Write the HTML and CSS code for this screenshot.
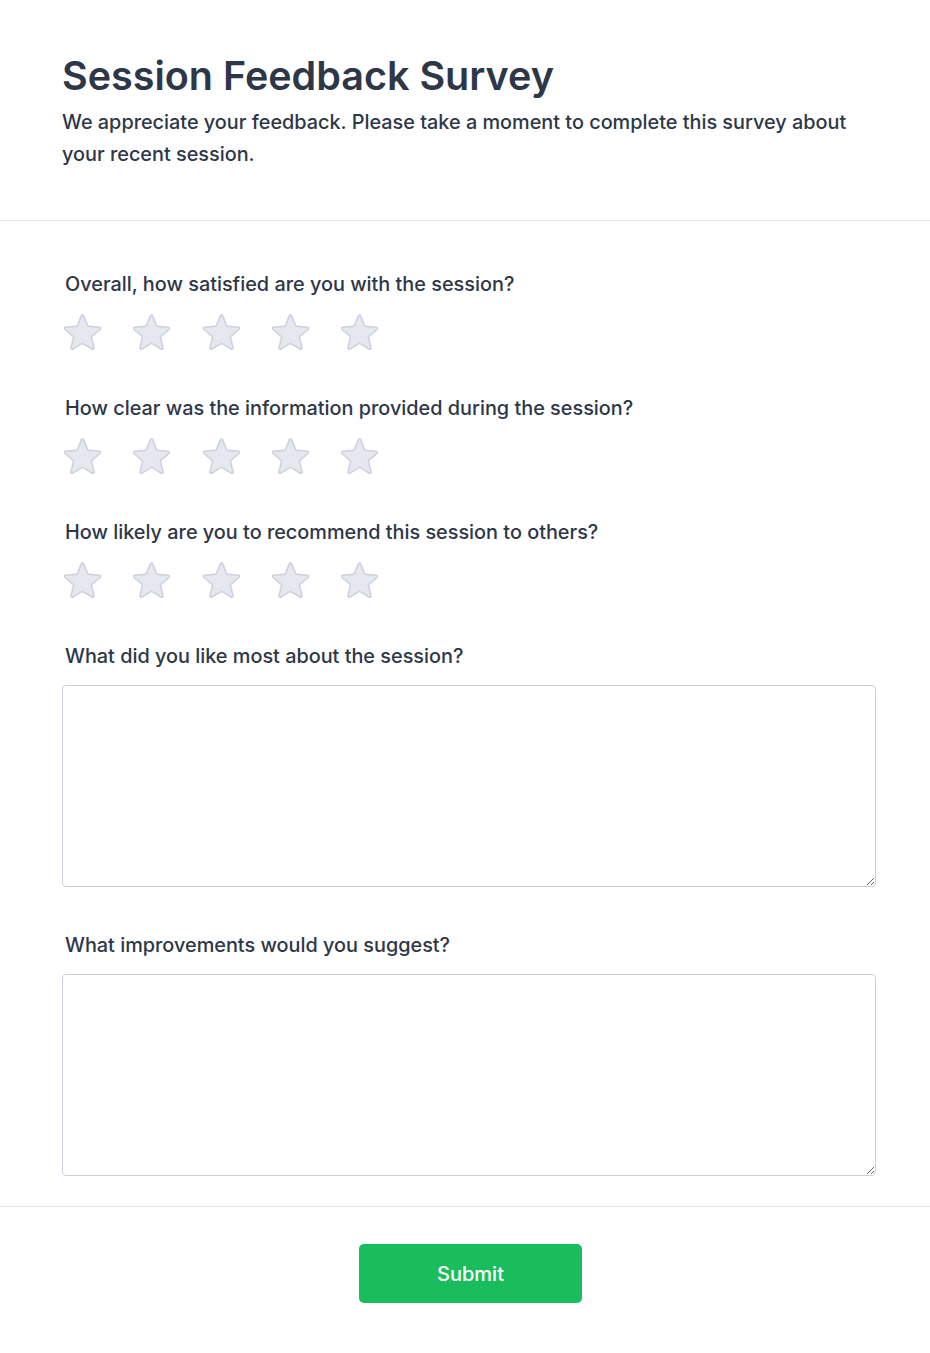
FILE: index.html
```html
<!DOCTYPE html>
<html>
<head>
  <title>Session Feedback Survey</title>
  <link rel="stylesheet" href="styles.css">
  <meta charset="utf-8">
  <meta name="viewport" content="width=device-width">
</head>

<body lang="en">
  <header class="s-head">
    <h1>Session Feedback Survey</h1>
    <p>We appreciate your feedback. Please take a moment to complete this survey about your recent session.</p>
  </header>

  <form class="s-body">
    <div class="s-q rate">
      <label>Overall, how satisfied are you with the session?</label>
      <div class="s-stars" data-name="overall"></div>
    </div>
    <div class="s-q rate">
      <label>How clear was the information provided during the session?</label>
      <div class="s-stars" data-name="clarity"></div>
    </div>
    <div class="s-q rate">
      <label>How likely are you to recommend this session to others?</label>
      <div class="s-stars" data-name="recommend"></div>
    </div>
    <div class="s-q">
      <label for="liked">What did you like most about the session?</label>
      <textarea id="liked"></textarea>
    </div>
    <div class="s-q">
      <label for="improve">What improvements would you suggest?</label>
      <textarea id="improve"></textarea>
    </div>
  </form>

  <footer class="s-foot">
    <button class="s-submit" type="button">Submit</button>
  </footer>

  <template class="s-startemp">
    <button class="s-star" type="button">
      <svg viewBox="1.6 2.7 20.8 19.2" width="41" height="38"><path d="M11.48 3.499a.562.562 0 011.04 0l2.125 5.111a.563.563 0 00.475.345l5.518.442c.499.04.701.663.321.988l-4.204 3.602a.563.563 0 00-.182.557l1.285 5.385a.562.562 0 01-.84.61l-4.725-2.885a.562.562 0 00-.586 0L6.982 20.54a.562.562 0 01-.84-.61l1.285-5.386a.562.562 0 00-.182-.557l-4.204-3.602a.563.563 0 01.321-.988l5.518-.442a.563.563 0 00.475-.345L11.48 3.5z"/></svg>
    </button>
  </template>

  <script>
    const startemp = document.getElementsByClassName("s-startemp")[0];
    const rows = document.getElementsByClassName("s-stars");
    for(let r=0;r<rows.length;r++){
      for(let i=0;i<5;i++){
        rows[r].appendChild(startemp.content.cloneNode(true));
      }
      let stars = rows[r].getElementsByClassName("s-star");
      for(let i=0;i<stars.length;i++){
        stars[i].addEventListener("click",()=>{
          for(let j=0;j<stars.length;j++){stars[j].classList.toggle("on", j<=i);}
        });
      }
    }
  </script>
</body>
</html>
```

FILE: styles.css
```css
body {
  margin: 0;
  color: #2d3748;
  font-family: Inter, "Noto Sans", sans-serif;
  background: #fff;
}

.s-head {
  padding: 52px 54px 50px 62px;
  border-bottom: 1px solid #e2e5ee;
}
.s-head h1 {
  margin: 0 0 6px;
  font-size: 39.5px;
  line-height: 48px;
  font-weight: 600;
}
.s-head p {
  margin: 0;
  font-size: 19.85px;
  line-height: 32px;
  font-weight: 500;
}

.s-body {
  padding: 49px 54px 30px 62px;
}
.s-q {
  display: flex;
  flex-direction: column;
  margin-bottom: 44px;
}
.s-q.rate {margin-bottom: 42px;}
.s-q:last-child {margin-bottom: 0;}
.s-q label {
  font-size: 19.85px;
  line-height: 28px;
  font-weight: 500;
  padding-left: 3px;
  margin-bottom: 15px;
}
.s-q.rate label {margin-bottom: 16px;}

.s-stars {
  display: flex;
  gap: 28.25px;
}
.s-star {
  border: none;
  background: none;
  padding: 0;
  cursor: pointer;
  line-height: 0;
}
.s-star svg {
  fill: #e5e8ef;
  stroke: #cdd2de;
  stroke-width: 0.8;
  stroke-linejoin: round;
}
.s-star:hover svg, .s-star.on svg {fill: #facc15; stroke: #eab308;}

.s-q textarea {
  box-sizing: border-box;
  width: 100%;
  height: 202px;
  border: 1px solid #cbd0dc;
  border-radius: 4px;
  padding: 10px 12px;
  font-family: inherit;
  font-size: 18px;
  color: inherit;
  resize: vertical;
}
.s-q textarea:focus {outline: none; border-color: #19bd5b;}

.s-foot {
  display: flex;
  justify-content: center;
  padding: 37px 54px 50px 65px;
  border-top: 1px solid #e2e5ee;
}
.s-submit {
  width: 223px;
  height: 59px;
  border: none;
  border-radius: 5px;
  background: #19bd5b;
  color: #fff;
  font-family: inherit;
  font-size: 20px;
  font-weight: 500;
  cursor: pointer;
}
.s-submit:hover {background: #16a850;}
```
